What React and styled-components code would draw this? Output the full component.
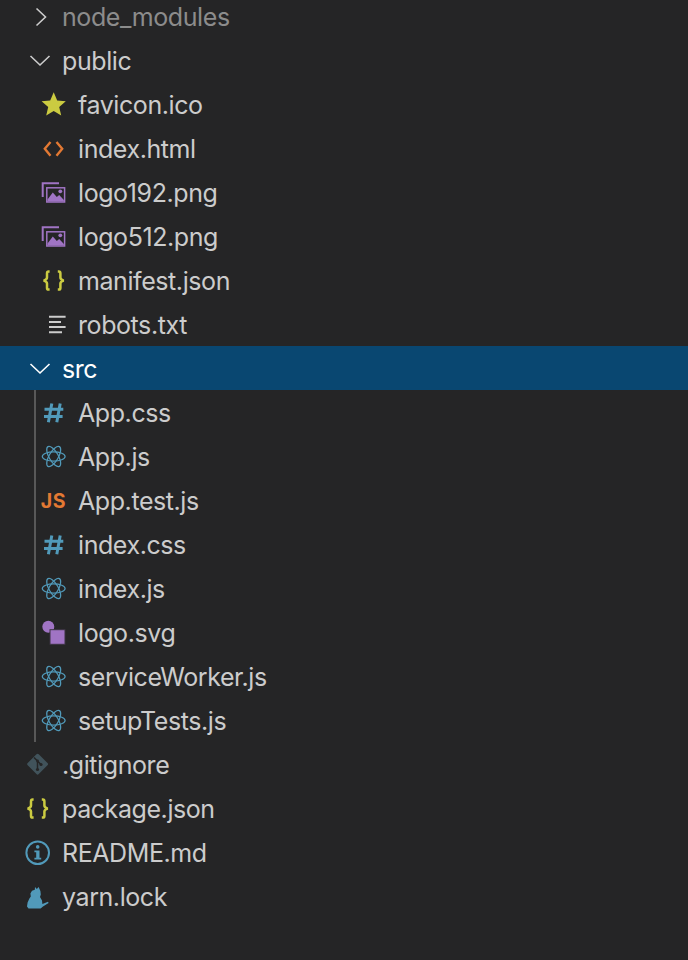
import React from "react";
import styled, { createGlobalStyle } from "styled-components";

const Global = createGlobalStyle`
  html, body { margin: 0; padding: 0; background: #252526; height: 960px; overflow: hidden; }
`;

const Tree = styled.div`
  width: 688px;
  height: 960px;
  overflow: hidden;
  background: #252526;
  font-family: Inter, "Liberation Sans", sans-serif;
  font-size: 25px;
  color: #cccccc;
`;
const List = styled.div`
  display: flex;
  flex-direction: column;
  margin-top: -6px;
`;
const Row = styled.div`
  display: flex;
  align-items: center;
  height: 44px;
  padding-left: 22px;
  background: ${(p) => (p.$selected ? "#094771" : "transparent")};
  color: ${(p) => (p.$selected ? "#ffffff" : p.$dim ? "#8c8c8c" : "#cccccc")};
`;
const Slot = styled.svg`
  flex: none;
  width: 32px;
  height: 32px;
  margin-right: 8px;
`;
const Label = styled.span`
  white-space: nowrap;
  letter-spacing: -0.42px;
  padding-top: 2px;
`;
const Group = styled.div`
  display: flex;
  flex-direction: column;
`;
const Guided = styled(Group)`
  margin-left: 34px;
  border-left: 2px solid #585858;
  & > ${Row} { padding-left: 2px; }
`;
const Nested = styled(Group)`
  & > ${Row} { padding-left: 38px; }
`;

const BLUE = "#519aba", PURPLE = "#a074c4", YELLOW = "#cbcb41", ORANGE = "#e37933";

const ChevronRight = ({ color }) => (
  <Slot viewBox="0 0 32 32" fill="none" stroke={color} strokeWidth="1.6">
    <path d="M14.5 8.5 23.5 17 14.5 25.5" />
  </Slot>
);
const ChevronDown = ({ color }) => (
  <Slot viewBox="0 0 32 32" fill="none" stroke={color} strokeWidth="1.6">
    <path d="M8.5 12 18 21 27.5 12" />
  </Slot>
);
const Star = () => (
  <Slot viewBox="0 0 32 32">
    <path fill={YELLOW} d="M15.7 4.3 19.2 12.6 27.8 13.3 21.2 19 23.2 27.4 15.7 23 8.2 27.4 10.2 19 3.6 13.3 12.2 12.6Z" />
  </Slot>
);
const Code = () => (
  <Slot viewBox="0 0 32 32" fill="none" stroke={ORANGE} strokeWidth="2.4">
    <path d="M12.5 10 6.8 16.8 12.5 23.8M18.5 10 24.2 16.8 18.5 23.8" />
  </Slot>
);
const Picture = () => (
  <Slot viewBox="0 0 32 32">
    <path fill="none" stroke={PURPLE} strokeWidth="2" d="M4.7 21V7.3H21" />
    <rect x="8.8" y="11.8" width="17.8" height="14.2" fill="none" stroke={PURPLE} strokeWidth="1.5" />
    <path fill={PURPLE} d="M9.5 25.4V23.5L14.8 16.4 18.8 21 21.2 19 25.9 24V25.4Z" />
    <circle cx="22.3" cy="15.3" r="1.9" fill={PURPLE} />
  </Slot>
);
const Braces = () => (
  <Slot viewBox="0 0 32 32" fill="none" stroke={YELLOW} strokeWidth="2.5">
    <path d="M11.6 7.4H10.6C9.4 7.4 9 8.2 9 9.4V13.6C9 15.2 8 16 5.6 16.6 8 17.2 9 18 9 19.6V24C9 25.2 9.4 25.6 10.6 25.6H11.6" />
    <path d="M19.8 7.4H20.8C22 7.4 22.4 8.2 22.4 9.4V13.6C22.4 15.2 23.4 16 25.8 16.6 23.4 17.2 22.4 18 22.4 19.6V24C22.4 25.2 22 25.6 20.8 25.6H19.8" />
  </Slot>
);
const Lines = () => (
  <Slot viewBox="0 0 32 32" fill="none" stroke="#cccccc" strokeWidth="1.9">
    <path d="M11 8.7H27.6M11 14H23M11 19H27.6M11 24.3H24" />
  </Slot>
);
const Hash = () => (
  <Slot viewBox="0 0 32 32" fill="none" stroke={BLUE} strokeWidth="3">
    <path d="M13.8 7.5 10.4 26.2M22.2 7.5 18.8 26.2M6.5 13.2H25.3M6 20.4H24.6" />
  </Slot>
);
const ReactAtom = () => (
  <Slot viewBox="0 0 32 32" fill="none" stroke={BLUE} strokeWidth="1.25">
    <g transform="translate(15.7 16.5)">
      <ellipse rx="11.4" ry="4.6" />
      <ellipse rx="11.4" ry="4.6" transform="rotate(60)" />
      <ellipse rx="11.4" ry="4.6" transform="rotate(120)" />
    </g>
  </Slot>
);
const JsGlyph = styled.text`
  font-family: Inter, "Liberation Sans", sans-serif;
  font-size: 19.5px;
  font-weight: 700;
  letter-spacing: 0.6px;
  fill: ${ORANGE};
`;
const Js = () => (
  <Slot viewBox="0 0 32 32">
    <JsGlyph x="15.5" y="24" textAnchor="middle">JS</JsGlyph>
  </Slot>
);
const Shapes = () => (
  <Slot viewBox="0 0 32 32">
    <circle cx="10.3" cy="10.7" r="6" fill={PURPLE} />
    <rect x="12" y="13.7" width="15" height="14.6" fill={PURPLE} stroke="#3a3340" strokeWidth="1" />
  </Slot>
);
const Git = () => (
  <Slot viewBox="0 0 32 32">
    <rect x="7.8" y="8.4" width="15.6" height="15.6" rx="1.6" fill="#41535b" transform="rotate(45 15.6 16.2)" />
    <path fill="none" stroke="#252526" strokeWidth="1.5" d="M12 9.5 19 16.5M15.5 13V21.5" />
    <circle cx="15.5" cy="21.5" r="1.6" fill="#252526" />
    <circle cx="19" cy="16.5" r="1.6" fill="#252526" />
    <circle cx="15.5" cy="13" r="1.4" fill="#252526" />
  </Slot>
);
const Info = () => (
  <Slot viewBox="0 0 32 32">
    <circle cx="15.7" cy="16.8" r="11.3" fill="none" stroke={BLUE} strokeWidth="2" />
    <circle cx="15.7" cy="10.9" r="1.8" fill={BLUE} />
    <path fill={BLUE} d="M12.4 14.4H17.5V21.7H19.2V23.5H12.4V21.7H14.2V16.2H12.4Z" />
  </Slot>
);
const Yarn = () => (
  <Slot viewBox="0 0 32 32">
    <path fill={BLUE} d="M13 7 14.8 9 16.6 7 18.4 11 18.8 14.5 18 17 20 20.5 20.4 24 26 21.8 26.6 23 21 26.4 18.6 28.4 6.5 28.6 5 26.6 5.6 22.5 7.4 18.5 8.8 16.5 8.4 13.5 10 10.8 12.8 9.8Z" />
  </Slot>
);

const Item = ({ icon: Icon, name, dim, selected }) => (
  <Row $dim={dim} $selected={selected}>
    <Icon color={selected ? "#ffffff" : "#cccccc"} />
    <Label>{name}</Label>
  </Row>
);

export default function App() {
  return (
    <Tree>
      <Global />
      <List>
        <Item icon={ChevronRight} name="node_modules" dim />
        <Item icon={ChevronDown} name="public" />
        <Nested>
          <Item icon={Star} name="favicon.ico" />
          <Item icon={Code} name="index.html" />
          <Item icon={Picture} name="logo192.png" />
          <Item icon={Picture} name="logo512.png" />
          <Item icon={Braces} name="manifest.json" />
          <Item icon={Lines} name="robots.txt" />
        </Nested>
        <Item icon={ChevronDown} name="src" selected />
        <Guided>
          <Item icon={Hash} name="App.css" />
          <Item icon={ReactAtom} name="App.js" />
          <Item icon={Js} name="App.test.js" />
          <Item icon={Hash} name="index.css" />
          <Item icon={ReactAtom} name="index.js" />
          <Item icon={Shapes} name="logo.svg" />
          <Item icon={ReactAtom} name="serviceWorker.js" />
          <Item icon={ReactAtom} name="setupTests.js" />
        </Guided>
        <Item icon={Git} name=".gitignore" />
        <Item icon={Braces} name="package.json" />
        <Item icon={Info} name="README.md" />
        <Item icon={Yarn} name="yarn.lock" />
      </List>
    </Tree>
  );
}
